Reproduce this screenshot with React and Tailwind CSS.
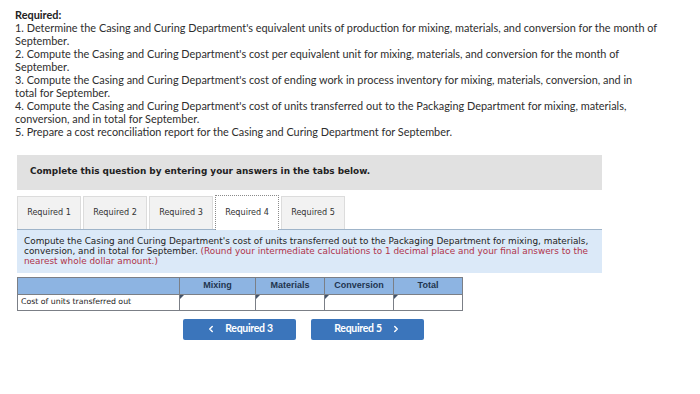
import React from "react";
import { ChevronLeft, ChevronRight } from "lucide-react";

const lines = [
  "1. Determine the Casing and Curing Department's equivalent units of production for mixing, materials, and conversion for the month of",
  "September.",
  "2. Compute the Casing and Curing Department's cost per equivalent unit for mixing, materials, and conversion for the month of",
  "September.",
  "3. Compute the Casing and Curing Department's cost of ending work in process inventory for mixing, materials, conversion, and in",
  "total for September.",
  "4. Compute the Casing and Curing Department's cost of units transferred out to the Packaging Department for mixing, materials,",
  "conversion, and in total for September.",
  "5. Prepare a cost reconciliation report for the Casing and Curing Department for September.",
];

const tabs = ["Required 1", "Required 2", "Required 3", "Required 4", "Required 5"];

const InputCell = ({ w }) => (
  <td className={`relative h-[16px] border border-[#7b7f86] bg-white p-0 ${w}`}>
    <span className="absolute left-0 top-0 h-0 w-0 border-r-[4px] border-t-[4px] border-r-transparent border-t-[#44546a]" />
  </td>
);

export default function App() {
  return (
    <div className="h-[394px] w-[700px] overflow-hidden bg-white">
      <div className="px-[15px] pt-[9px] font-['Lato','Open_Sans',sans-serif] text-[10.9px] leading-[12.95px] text-[#2e2e2e]">
        <div className="font-bold text-[#222]">Required:</div>
        {lines.map((l, i) => (
          <div key={i} className="whitespace-nowrap">
            {l}
          </div>
        ))}
      </div>

      <div className="ml-[17px] mt-[16px] w-[585px] font-['DejaVu_Sans',sans-serif]">
        <div className="flex h-[35px] items-center bg-[#e1e1e1] pl-[13px] text-[8.9px] font-bold text-[#222]">
          Complete this question by entering your answers in the tabs below.
        </div>

        <div className="mt-[5px] flex items-end gap-[2px]">
          {tabs.map((t, i) => {
            const active = i === 3;
            return (
              <div
                key={t}
                className={`flex w-[64px] items-center justify-center text-[8.1px] text-[#333] ${
                  active
                    ? "relative z-10 -mb-px h-[35px] border border-dotted border-b-0 border-[#8a8a8a] bg-white pb-px"
                    : "h-[33px] border border-b-0 border-[#dcdcdc] bg-[#f2f2f2]"
                }`}
              >
                {t}
              </div>
            );
          })}
        </div>

        <div className="h-[44px] border-t border-[#9fb4c9] bg-[#dbe9f8] px-[7px] pt-[6px] text-[8.9px] leading-[10.4px] text-[#222]">
          <div className="whitespace-nowrap">
            Compute the Casing and Curing Department's cost of units transferred out to the Packaging Department for mixing, materials,
          </div>
          <div className="whitespace-nowrap">
            conversion, and in total for September.{" "}
            <span className="text-[#b0334a]">
              (Round your intermediate calculations to 1 decimal place and your final answers to the
            </span>
          </div>
          <div className="whitespace-nowrap text-[#b0334a]">nearest whole dollar amount.)</div>
        </div>

        <table className="mt-[4px] border-collapse">
          <thead>
            <tr className="h-[17px] bg-[#8db4e2] font-['Liberation_Sans',Arial,sans-serif] text-[9px] font-bold text-[#22344f]">
              <th className="w-[162px] border border-[#7b7f86] p-0" />
              <th className="w-[76px] border border-[#7b7f86] p-0">Mixing</th>
              <th className="w-[69px] border border-[#7b7f86] p-0">Materials</th>
              <th className="w-[69px] border border-[#7b7f86] p-0">Conversion</th>
              <th className="w-[69px] border border-[#7b7f86] p-0">Total</th>
            </tr>
          </thead>
          <tbody>
            <tr>
              <td className="h-[16px] border border-[#7b7f86] px-[3px] py-0 text-[7.8px] text-[#222]">
                Cost of units transferred out
              </td>
              <InputCell w="w-[76px]" />
              <InputCell w="w-[69px]" />
              <InputCell w="w-[69px]" />
              <InputCell w="w-[69px]" />
            </tr>
          </tbody>
        </table>

        <div className="ml-[166px] mt-[8px] flex gap-[15px] font-['Lato','Open_Sans',sans-serif] text-[10.5px] font-bold tracking-[-0.3px] text-white">
          <button className="flex h-[21px] w-[113px] items-center justify-center gap-[9px] rounded-[2px] bg-[#3b75bb]">
            <ChevronLeft size={10} strokeWidth={3.5} />
            <span>Required 3</span>
          </button>
          <button className="flex h-[21px] w-[113px] items-center justify-center gap-[9px] rounded-[2px] bg-[#3b75bb]">
            <span>Required 5</span>
            <ChevronRight size={10} strokeWidth={3.5} />
          </button>
        </div>
      </div>
    </div>
  );
}
